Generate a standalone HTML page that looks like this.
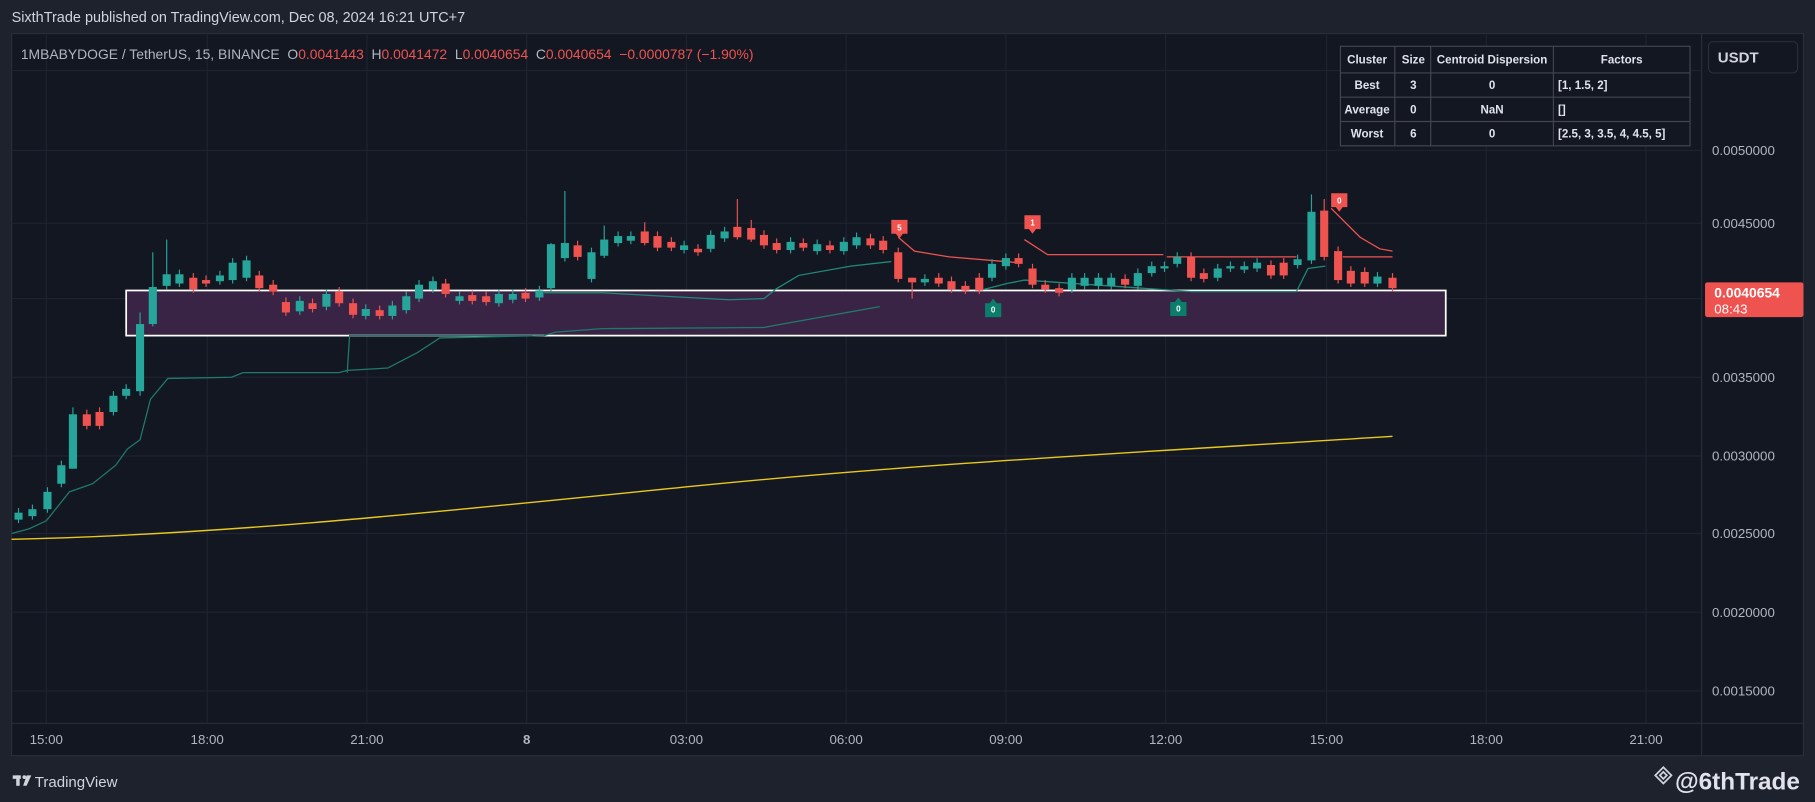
<!DOCTYPE html><html><head><meta charset="utf-8"><style>
html,body{margin:0;padding:0;background:#1e222d;width:1815px;height:802px;overflow:hidden}
svg{display:block}
text{font-family:"Liberation Sans",sans-serif}
</style></head><body>
<svg width="1815" height="802" viewBox="0 0 1568 693" preserveAspectRatio="none" xmlns="http://www.w3.org/2000/svg">
<rect x="0" y="0" width="1568" height="693" fill="#1e222d"/>
<text x="10" y="19" fill="#d1d4dc" font-size="12.5">SixthTrade published on TradingView.com, Dec 08, 2024 16:21 UTC+7</text>
<rect x="10" y="29" width="1548" height="624" fill="#131722" stroke="#2a2e39"/>
<g stroke="#1f2330" stroke-width="1">
<line x1="40" y1="29" x2="40" y2="625"/><line x1="179" y1="29" x2="179" y2="625"/><line x1="317" y1="29" x2="317" y2="625"/><line x1="455" y1="29" x2="455" y2="625"/><line x1="593" y1="29" x2="593" y2="625"/><line x1="731" y1="29" x2="731" y2="625"/><line x1="869" y1="29" x2="869" y2="625"/><line x1="1007" y1="29" x2="1007" y2="625"/><line x1="1146" y1="29" x2="1146" y2="625"/><line x1="1284" y1="29" x2="1284" y2="625"/><line x1="1422" y1="29" x2="1422" y2="625"/>
<line x1="10" y1="61" x2="1470" y2="61"/><line x1="10" y1="130" x2="1470" y2="130"/><line x1="10" y1="193" x2="1470" y2="193"/><line x1="10" y1="258" x2="1470" y2="258"/><line x1="10" y1="326" x2="1470" y2="326"/><line x1="10" y1="394" x2="1470" y2="394"/><line x1="10" y1="461" x2="1470" y2="461"/><line x1="10" y1="529" x2="1470" y2="529"/><line x1="10" y1="597" x2="1470" y2="597"/>
</g>
<line x1="1470" y1="29" x2="1470" y2="653" stroke="#2a2e39"/>
<line x1="10" y1="625" x2="1558" y2="625" stroke="#2a2e39"/>
<text x="18" y="51" font-size="12" fill="#b2b5be" xml:space="preserve" style="white-space:pre">1MBABYDOGE / TetherUS, 15, BINANCE  O<tspan fill="#ef5350">0.0041443</tspan>  H<tspan fill="#ef5350">0.0041472</tspan>  L<tspan fill="#ef5350">0.0040654</tspan>  C<tspan fill="#ef5350">0.0040654</tspan>  <tspan fill="#ef5350">−0.0000787 (−1.90%)</tspan></text>
<rect x="109" y="251" width="1140" height="39" fill="#3a2446" stroke="#ffffff" stroke-width="1.5"/>
<path d="M10,466 C200,462 400,440 600,420 S1000,390 1203,377" fill="none" stroke="#e8c81e" stroke-width="1.2"/>
<g fill="none" stroke-width="1.1">
<path d="M10,461 L25,457 L40,450 L60,425 L80,418 L100,402 L110,388 L121,380 L130,345 L145,327 L200,326 L210,322 L293,322 L300,320 L335,318 L360,305 L380,292 L470,290 L480,287 L520,284 L660,283 L670,281 L760,265" stroke="#1f7a6c"/>
<path d="M300,322 L302,290 L460,290" stroke="#1f7a6c"/>
<path d="M470,253 L520,253 L630,259 L660,258 L670,250 L690,238 L735,230 L770,226" stroke="#1f8a78"/>
<path d="M850,250 L870,245 L885,242 L1030,252 L1120,252 L1130,232 L1145,230" stroke="#1f8a78"/>
<path d="M776,205 L790,217 L820,222 L880,227" stroke="#ef5350"/>
<path d="M885,207 L905,220 L1005,220" stroke="#ef5350"/>
<path d="M1008,222 L1120,222" stroke="#ef5350"/>
<path d="M1150,180 L1175,205 L1192,215 L1203,217" stroke="#ef5350"/>
<path d="M1160,222 L1203,222" stroke="#ef5350"/>
</g>
<g id="candles" stroke-width="1"></g>
<g font-size="7" font-weight="bold" fill="#fff" text-anchor="middle">
<path d="M770,190 h14 v12 h-4 l-3,4 l-3,-4 h-4z" fill="#ef5350"/><text x="777" y="199">5</text>
<path d="M885,186 h14 v12 h-4 l-3,4 l-3,-4 h-4z" fill="#ef5350"/><text x="892" y="195">1</text>
<path d="M1150,167 h14 v12 h-4 l-3,4 l-3,-4 h-4z" fill="#ef5350"/><text x="1157" y="176">0</text>
<path d="M851,274 h14 v-12 h-4 l-3,-4 l-3,4 h-4z" fill="#0b7d6b"/><text x="858" y="270">0</text>
<path d="M1011,273 h14 v-12 h-4 l-3,-4 l-3,4 h-4z" fill="#0b7d6b"/><text x="1018" y="269">0</text>
</g>
<g>
<rect x="1158" y="40" width="302" height="86" fill="#131722" stroke="#434651"/>
<g stroke="#434651"><line x1="1205" y1="40" x2="1205" y2="126"/><line x1="1236" y1="40" x2="1236" y2="126"/><line x1="1342" y1="40" x2="1342" y2="126"/><line x1="1158" y1="63" x2="1460" y2="63"/><line x1="1158" y1="84" x2="1460" y2="84"/><line x1="1158" y1="105" x2="1460" y2="105"/></g>
<g font-size="10" fill="#e0e3eb" text-anchor="middle" font-weight="bold">
<text x="1181" y="55">Cluster</text><text x="1221" y="55">Size</text><text x="1289" y="55">Centroid Dispersion</text><text x="1401" y="55">Factors</text>
<text x="1181" y="77">Best</text><text x="1221" y="77">3</text><text x="1289" y="77">0</text>
<text x="1181" y="98">Average</text><text x="1221" y="98">0</text><text x="1289" y="98">NaN</text>
<text x="1181" y="119">Worst</text><text x="1221" y="119">6</text><text x="1289" y="119">0</text>
<text x="1346" y="77" text-anchor="start">[1, 1.5, 2]</text><text x="1346" y="98" text-anchor="start">[]</text><text x="1346" y="119" text-anchor="start">[2.5, 3, 3.5, 4, 4.5, 5]</text>
</g></g>
<rect x="1476" y="36" width="77" height="27" rx="4" fill="#131722" stroke="#2a2e39"/>
<text x="1484" y="54" font-size="13" fill="#d1d4dc" font-weight="bold">USDT</text>
<g font-size="11.5" fill="#b2b5be">
<text x="1479" y="134">0.0050000</text><text x="1479" y="197">0.0045000</text><text x="1479" y="330">0.0035000</text><text x="1479" y="398">0.0030000</text><text x="1479" y="465">0.0025000</text><text x="1479" y="533">0.0020000</text><text x="1479" y="601">0.0015000</text>
</g>
<rect x="1473" y="244" width="85" height="30" rx="2" fill="#ef5350"/>
<text x="1481" y="257" font-size="12" font-weight="bold" fill="#fff">0.0040654</text>
<text x="1481" y="271" font-size="11.5" fill="#fff">08:43</text>
<g font-size="11.5" fill="#b2b5be" text-anchor="middle">
<text x="40" y="643">15:00</text><text x="179" y="643">18:00</text><text x="317" y="643">21:00</text><text x="455" y="643" font-weight="bold">8</text><text x="593" y="643">03:00</text><text x="731" y="643">06:00</text><text x="869" y="643">09:00</text><text x="1007" y="643">12:00</text><text x="1146" y="643">15:00</text><text x="1284" y="643">18:00</text><text x="1422" y="643">21:00</text>
</g>
<g fill="#d1d4dc"><rect x="11" y="670" width="7" height="3"/><rect x="14" y="670" width="3" height="9"/><circle cx="21" cy="671.5" r="1.6"/><path d="M23,670 h4 l-4,9 h-3z"/></g>
<text x="30" y="680" font-size="13" fill="#d1d4dc">TradingView</text>
<path d="M1437,663 l7,7 l-7,7 l-7,-7z M1437,667 l3,3 l-3,3 l-3,-3z" fill="none" stroke="#d1d4dc" stroke-width="1.5"/>
<text x="1447" y="682" font-size="21" fill="#e0e3eb" font-weight="bold">@6thTrade</text>
</svg>
<script>
var c=[[16,449,443],[28,446,440],[41,440,425],[53,418,402],[63,405,358,352,405],[75,358,368],[86,356,368],[98,356,342],[109,342,336],[121,338,280,270,342],[132,280,248,218,282],[144,247,237,207,250],[155,245,237],[167,240,250],[178,242,245],[190,243,238],[201,242,227],[213,240,225],[224,238,249],[236,246,252],[247,261,270],[259,269,260],[270,262,267],[282,265,254],[293,252,262],[305,262,272],[316,273,267],[328,268,273],[339,273,264],[351,268,256],[362,258,246],[374,250,243],[385,245,254],[397,260,256],[408,255,260],[420,256,261],[431,262,254],[443,259,254],[454,253,258],[466,257,251],[476,249,211,210,252],[488,223,210,165,226],[499,212,222],[511,241,218],[522,221,207,195,223],[534,210,204],[545,208,204],[557,200,210,192,212],[568,204,214],[580,209,214],[591,216,212],[603,215,218],[614,215,203],[626,206,200],[637,196,205,172,207],[649,197,207,190,209],[660,203,212],[671,210,216],[683,216,209],[694,210,214],[706,217,211],[717,212,216],[729,217,209],[740,212,205],[752,206,212],[763,208,216],[776,218,241],[788,240,244,240,258],[799,244,241],[811,240,245],[822,243,250],[834,247,251],[846,240,251],[857,240,228],[869,230,223],[880,223,228],[892,232,246],[903,246,250],[915,249,253],[926,250,240],[937,247,240],[949,247,240],[960,247,240],[972,241,246],[983,247,236],[995,236,230],[1006,232,230],[1017,228,222],[1029,222,240],[1040,236,241],[1052,240,232],[1063,232,230],[1075,233,230],[1086,232,227],[1098,229,238],[1109,227,238],[1121,229,224],[1133,225,183,168,228],[1144,182,222,172,225],[1156,217,242],[1167,234,245],[1179,235,245],[1190,245,239],[1203,240,249]];
var g=document.getElementById('candles'),s='';
c.forEach(function(k){var x=k[0],o=k[1],cl=k[2],up=cl<o,col=up?'#26a69a':'#ef5350';var t=Math.min(o,cl),b=Math.max(o,cl);var h=k[3]||t-4,l=k[4]||b+3;
s+='<line x1="'+x+'" y1="'+h+'" x2="'+x+'" y2="'+l+'" stroke="'+col+'"/><rect x="'+(x-3.5)+'" y="'+t+'" width="7" height="'+Math.max(b-t,1.5)+'" fill="'+col+'"/>';});
g.innerHTML=s;
</script>
</body></html>
